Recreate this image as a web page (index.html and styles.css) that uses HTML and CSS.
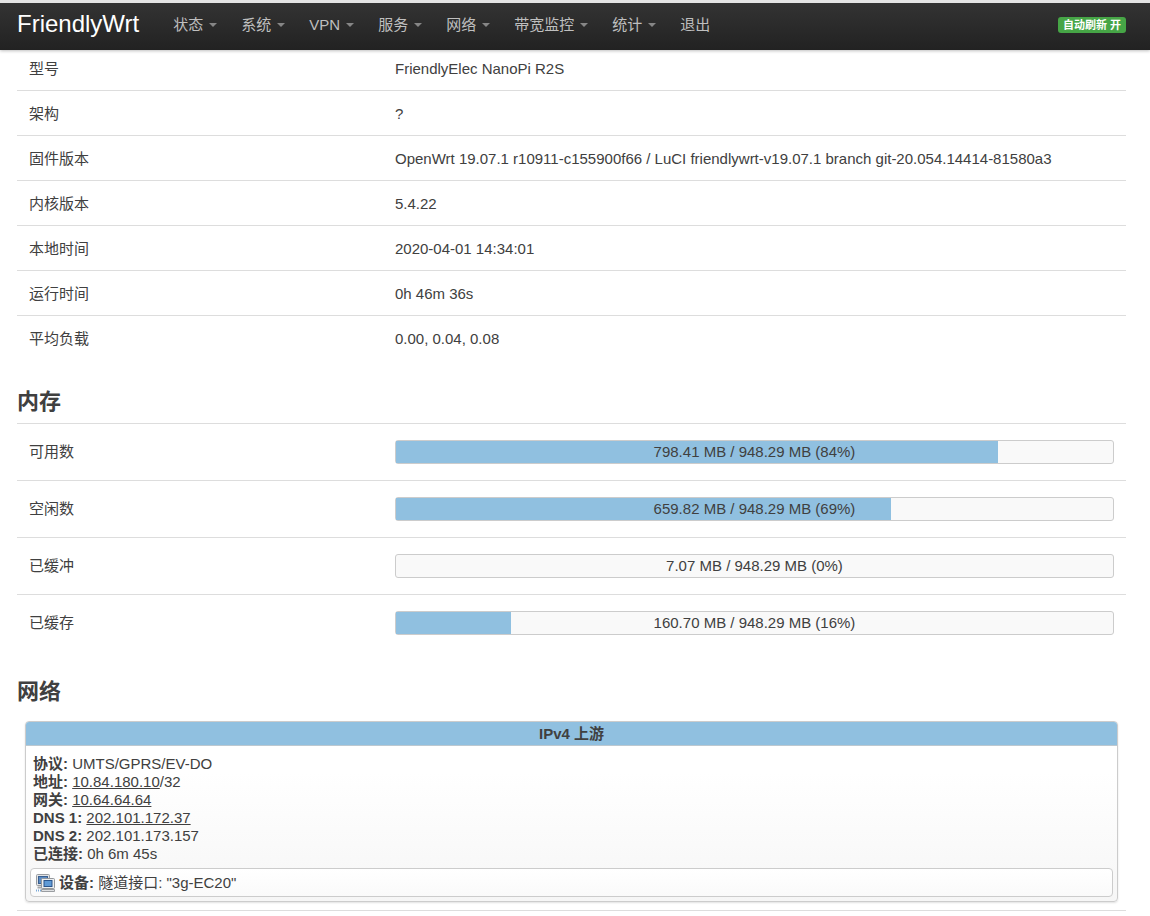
FILE: index.html
```html
<!DOCTYPE html>
<html lang="zh-CN">
<head>
<meta charset="utf-8">
<title>FriendlyWrt</title>
<link rel="stylesheet" href="styles.css">
</head>
<body>
<header class="topbar">
  <a class="brand" href="#">FriendlyWrt</a>
  <nav class="menu">
    <a class="menu-link has-caret" href="#">状态</a>
    <a class="menu-link has-caret" href="#">系统</a>
    <a class="menu-link has-caret" href="#">VPN</a>
    <a class="menu-link has-caret" href="#">服务</a>
    <a class="menu-link has-caret" href="#">网络</a>
    <a class="menu-link has-caret" href="#">带宽监控</a>
    <a class="menu-link has-caret" href="#">统计</a>
    <a class="menu-link" href="#">退出</a>
  </nav>
  <button class="refresh" type="button">自动刷新 开</button>
</header>
<main class="content">
  <section>
    <table class="info">
      <tbody>
        <tr><th scope="row">型号</th><td>FriendlyElec NanoPi R2S</td></tr>
        <tr><th scope="row">架构</th><td>?</td></tr>
        <tr><th scope="row">固件版本</th><td>OpenWrt 19.07.1 r10911-c155900f66 / LuCI friendlywrt-v19.07.1 branch git-20.054.14414-81580a3</td></tr>
        <tr><th scope="row">内核版本</th><td>5.4.22</td></tr>
        <tr><th scope="row">本地时间</th><td>2020-04-01 14:34:01</td></tr>
        <tr><th scope="row">运行时间</th><td>0h 46m 36s</td></tr>
        <tr><th scope="row">平均负载</th><td>0.00, 0.04, 0.08</td></tr>
      </tbody>
    </table>
  </section>
  <section>
    <h2 class="heading">内存</h2>
    <table class="info memory">
      <tbody>
        <tr><th scope="row">可用数</th><td><div class="meter"><div class="meter-fill" style="width:84%"></div><span class="meter-text">798.41 MB / 948.29 MB (84%)</span></div></td></tr>
        <tr><th scope="row">空闲数</th><td><div class="meter"><div class="meter-fill" style="width:69%"></div><span class="meter-text">659.82 MB / 948.29 MB (69%)</span></div></td></tr>
        <tr><th scope="row">已缓冲</th><td><div class="meter"><div class="meter-fill" style="width:0%"></div><span class="meter-text">7.07 MB / 948.29 MB (0%)</span></div></td></tr>
        <tr><th scope="row">已缓存</th><td><div class="meter"><div class="meter-fill" style="width:16%"></div><span class="meter-text">160.70 MB / 948.29 MB (16%)</span></div></td></tr>
      </tbody>
    </table>
  </section>
  <section class="network">
    <h2 class="heading">网络</h2>
    <article class="iface">
      <h3 class="iface-head">IPv4 上游</h3>
      <div class="iface-body">
        <div><strong>协议:</strong> UMTS/GPRS/EV-DO</div>
        <div><strong>地址:</strong> <a href="#">10.84.180.10</a>/32</div>
        <div><strong>网关:</strong> <a href="#">10.64.64.64</a></div>
        <div><strong>DNS 1:</strong> <a href="#">202.101.172.37</a></div>
        <div><strong>DNS 2:</strong> 202.101.173.157</div>
        <div><strong>已连接:</strong> 0h 6m 45s</div>
      </div>
      <div class="device">
        <svg class="device-icon" viewBox="0 0 20 20" aria-hidden="true">
          <rect x="1.500" y="1.500" width="13" height="11" rx="1" fill="#e2e4e6" stroke="#9a9da1"/>
          <rect x="3.500" y="3.500" width="9" height="7" fill="#5b8cc4" stroke="#3a5f90"/>
          <path d="M2.500 14.500h5" stroke="#a3a6aa" stroke-width="2"/>
          <rect x="6.500" y="5.500" width="13" height="10" rx="1" fill="#eceef0" stroke="#93979b"/>
          <rect x="9" y="7.500" width="8" height="6" fill="#5f9ad6" stroke="#2a548b"/>
          <path d="M6.500 16.500h13v2h-13z" fill="#dfe1e3" stroke="#9a9da1"/>
          <path d="M1 17.500h5" stroke="#7aa9d8" stroke-width="2" stroke-dasharray="1 1"/>
        </svg>
        <span><strong>设备:</strong> 隧道接口: "3g-EC20"</span>
      </div>
    </article>
  </section>
</main>
</body>
</html>
```
FILE: styles.css
```css
* { box-sizing: border-box; }

body {
  margin: 0;
  background: #fff;
  color: #404040;
  font: 15px/18px "Liberation Sans", "Noto Sans CJK SC", sans-serif;
}

.topbar {
  display: flex;
  align-items: center;
  height: 50px;
  padding: 0 24px 3px 17px;
  border-top: 3px solid #e4e4e4;
  background: linear-gradient(#333, #222);
  box-shadow: 0 1px 3px rgba(0, 0, 0, .25);
}

.brand {
  margin-right: 22px;
  padding-bottom: 3px;
  color: #fff;
  font-size: 24px;
  line-height: 28px;
  text-decoration: none;
}

.menu { display: flex; flex: 1; }

.menu-link {
  display: flex;
  align-items: center;
  gap: 6px;
  padding: 0 12px;
  color: #bfbfbf;
  text-decoration: none;
  white-space: nowrap;
}

.has-caret::after {
  content: "";
  border: 4px solid transparent;
  border-top-color: #868686;
  border-bottom: 0;
}

.refresh {
  padding: 0 5px;
  border: 0;
  border-radius: 3px;
  background: #46a546;
  color: #fff;
  font: bold 11px/16px "Liberation Sans", "Noto Sans CJK SC", sans-serif;
}

.content { padding: 0 24px 0 17px; }

.info {
  width: 100%;
  border-collapse: separate;
  border-spacing: 0;
  table-layout: fixed;
}

.info th,
.info td {
  height: 45px;
  padding: 1px 12px 0;
  border-top: 1px solid #ddd;
  text-align: left;
  vertical-align: middle;
}

.info th {
  width: 33%;
  font-weight: normal;
}

.info:not(.memory) tr:first-child > * {
  height: 40px;
  padding-bottom: 3px;
  border-top: 0;
}

.heading {
  margin: 0;
  padding: 24px 0 3px;
  font-size: 22px;
  line-height: 36px;
}

.memory th,
.memory td {
  height: 57px;
  padding-top: 0;
}

.meter {
  display: grid;
  height: 24px;
  border: 1px solid #ccc;
  border-radius: 3px;
  background: #f9f9f9;
}

.meter > * { grid-area: 1 / 1; }

.meter-fill { background: #90c0e0; }

.meter-text {
  line-height: 22px;
  text-align: center;
}

.network { border-bottom: 1px solid #ddd; padding-bottom: 8px; }

.network .heading { padding: 23px 0 11px; }

.iface {
  margin: 0 8px;
  border: 1px solid #ccc;
  border-radius: 4px;
  background: linear-gradient(#fff 50px, #f6f6f6);
  box-shadow: 0 1px 2px rgba(0, 0, 0, .12);
  overflow: hidden;
}

.iface-head {
  margin: 0;
  border-bottom: 1px solid #bcc8d0;
  background: #90c0e0;
  font-size: 15px;
  line-height: 23px;
  text-align: center;
}

.iface-body { padding: 9px 7px 5px; }

.iface-body > div { height: 18px; }

.iface a { color: inherit; text-decoration: underline; }

.device {
  display: flex;
  align-items: center;
  gap: 4px;
  height: 29px;
  margin: 0 4px 4px;
  padding: 0 4px;
  border: 1px solid #ccc;
  border-radius: 4px;
  background: linear-gradient(#fff, #fafafa);
}

.device-icon { width: 20px; height: 20px; }
```
